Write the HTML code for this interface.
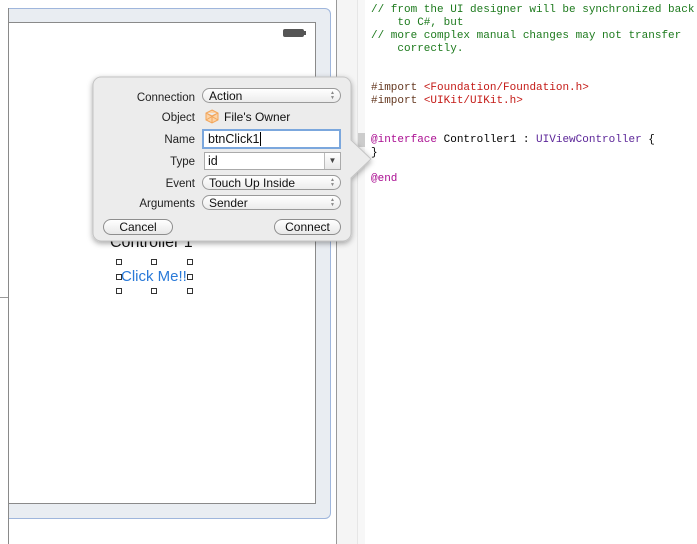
<!DOCTYPE html>
<html><head><style>
*{margin:0;padding:0;box-sizing:border-box}
body{width:697px;height:544px;position:relative;overflow:hidden;background:#fff;font-family:"Liberation Sans",sans-serif}
.a{position:absolute}
.code{font-family:"Liberation Mono",monospace;font-size:11px;line-height:13px;white-space:pre;color:#000}
.g{color:#1d7a1d}.r{color:#c41a16}.p{color:#aa0d91}.pu{color:#5c2699}.m{color:#643820}
.lbl{position:absolute;right:0;width:100px;text-align:right;font-size:11.5px;color:#222}
.pop{position:absolute;left:202px;width:139px;height:15px;border:1px solid #9a9a9a;border-radius:8px;background:linear-gradient(#fff,#ececec);font-size:12px;padding-left:6px;line-height:14px;color:#111}
.ar{position:absolute;right:5px;top:2px;font-size:5px;line-height:5px;color:#888}
.btn{position:absolute;height:16px;border:1px solid #8e8e8e;border-radius:8px;background:linear-gradient(#fff,#e8e8e8);font-size:12px;text-align:center;line-height:15px;color:#111}
.h{position:absolute;width:6px;height:6px;border:1px solid #333;background:#fff}
</style></head><body>
<div class="a" style="left:8px;top:8px;width:323px;height:511px;border:1px solid #9fb6dc;border-left:none;border-radius:0 6px 6px 0;background:#e9edf2"></div>
<div class="a" style="left:8px;top:22px;width:308px;height:482px;border:1px solid #8a8a8a;border-left:none;background:#fff"></div>
<div class="a" style="left:8px;top:8px;width:1px;height:536px;background:#8a8a8a"></div>
<div class="a" style="left:0;top:297px;width:8px;height:1px;background:#999"></div>
<div class="a" style="left:283px;top:29px;width:21px;height:8px;border:1px solid #555;border-radius:2px;background:#555"></div>
<div class="a" style="left:304px;top:31px;width:2px;height:4px;background:#555"></div>
<div class="a" style="left:110px;top:234px;font-size:16px;color:#111">Controller 1</div>
<div class="a" style="left:121px;top:268px;font-size:15px;color:#2a7ad8">Click Me!!</div>
<div class="h" style="left:116px;top:259px"></div><div class="h" style="left:151px;top:259px"></div><div class="h" style="left:187px;top:259px"></div>
<div class="h" style="left:116px;top:274px"></div><div class="h" style="left:187px;top:274px"></div>
<div class="h" style="left:116px;top:288px"></div><div class="h" style="left:151px;top:288px"></div><div class="h" style="left:187px;top:288px"></div>
<div class="a" style="left:336px;top:0;width:1px;height:544px;background:#999"></div>
<div class="a" style="left:337px;top:0;width:20px;height:544px;background:#f5f5f5"></div>
<div class="a" style="left:357px;top:0;width:1px;height:544px;background:#e6e6e6"></div>
<div class="a" style="left:358px;top:0;width:7px;height:544px;background:#f7f7f7"></div>
<div class="a" style="left:358px;top:133px;width:7px;height:14px;background:#ccc"></div>
<div class="a code" style="left:371px;top:4px"><span class="g">// from the UI designer will be synchronized back
    to C#, but
// more complex manual changes may not transfer
    correctly.</span>


<span class="m">#import</span> <span class="r">&lt;Foundation/Foundation.h&gt;</span>
<span class="m">#import</span> <span class="r">&lt;UIKit/UIKit.h&gt;</span>


<span class="p">@interface</span> Controller1 : <span class="pu">UIViewController</span> {
}

<span class="p">@end</span></div>
<svg class="a" style="left:80px;top:66px" width="310" height="195">
<defs><filter id="s" x="-20%" y="-20%" width="140%" height="150%"><feDropShadow dx="0" dy="2" stdDeviation="3" flood-color="#000" flood-opacity="0.35"/></filter></defs>
<path d="M21 11 H263 a8 8 0 0 1 8 8 V74 L291 93 L271 112 V167 a8 8 0 0 1 -8 8 H21 a8 8 0 0 1 -8 -8 V19 a8 8 0 0 1 8 -8 Z" fill="#ececec" stroke="#c4c4c4" stroke-width="1" filter="url(#s)"/>
</svg>
<div class="a" style="left:95px;top:92px;width:100px;height:130px">
<div class="lbl" style="top:0px">Connection</div>
<div class="lbl" style="top:20px">Object</div>
<div class="lbl" style="top:42px">Name</div>
<div class="lbl" style="top:64px">Type</div>
<div class="lbl" style="top:86px">Event</div>
<div class="lbl" style="top:106px">Arguments</div>
</div>
<div class="pop" style="top:88px">Action<span class="ar">▲<br>▼</span></div>
<svg class="a" style="left:205px;top:109px" width="14" height="15"><path d="M7 1 L13 4 V11 L7 14 L1 11 V4 Z M1 4 L7 7 L13 4 M7 7 V14 M1 11 L13 4 M1 4 L13 11" fill="#fcd3a6" stroke="#f2a55a" stroke-width="1"/></svg>
<div class="a" style="left:224px;top:110px;font-size:12px;color:#111">File's Owner</div>
<div class="a" style="left:202px;top:129px;width:139px;height:20px;border:2px solid #7ba7dd;background:#fff;font-size:12.5px;padding:1px 0 0 4px;color:#111">btnClick1<span style="border-left:1px solid #000;margin-left:1px"></span></div>
<div class="a" style="left:204px;top:152px;width:137px;height:18px;border:1px solid #aaa;background:#fff;font-size:12.5px;padding:1px 0 0 3px;color:#111">id<div class="a" style="right:0;top:0;width:16px;height:16px;border-left:1px solid #bbb;background:linear-gradient(#fff,#e8e8e8);font-size:8px;text-align:center;line-height:16px;color:#444">▼</div></div>
<div class="pop" style="top:175px">Touch Up Inside<span class="ar">▲<br>▼</span></div>
<div class="pop" style="top:195px">Sender<span class="ar">▲<br>▼</span></div>
<div class="btn" style="left:103px;top:219px;width:70px">Cancel</div>
<div class="btn" style="left:274px;top:219px;width:67px">Connect</div>
</body></html>
